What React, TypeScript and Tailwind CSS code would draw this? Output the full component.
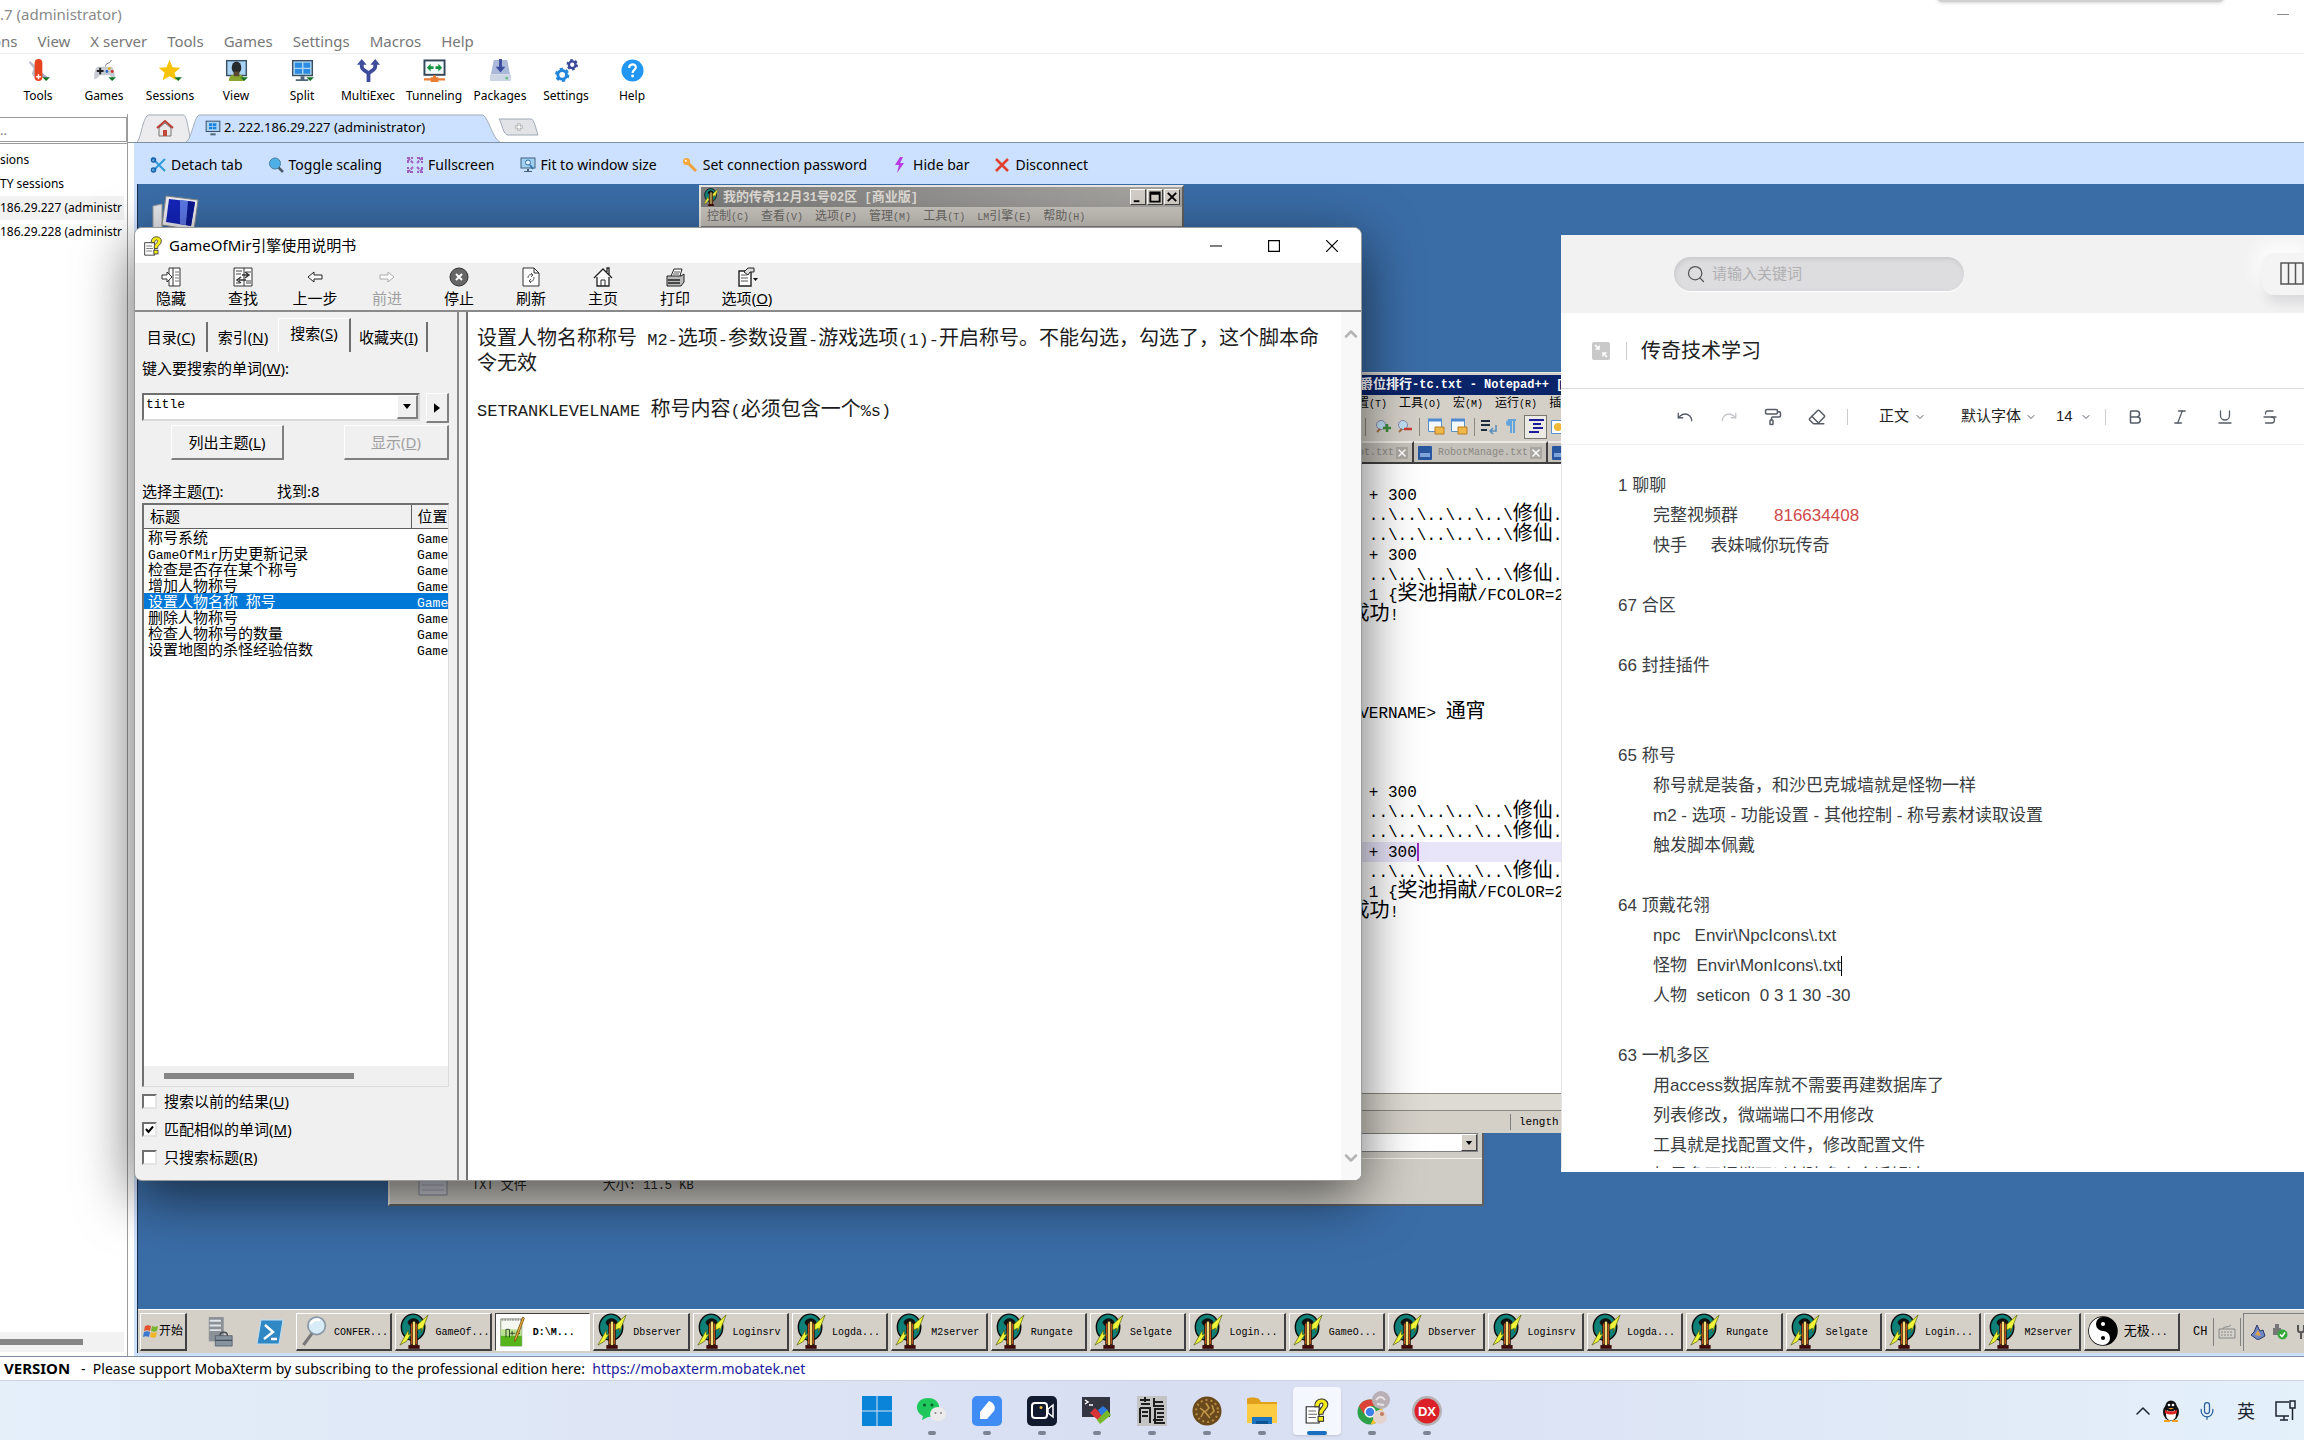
import type { ReactNode } from "react"
import { Search, Undo, Redo, PaintRoller, Eraser, Bold, Italic, Underline, Strikethrough, ChevronDown, ChevronUp, Mic, X } from "lucide-react"

const RAISED = "border border-t-white border-l-white border-r-[#404040] border-b-[#404040]"
const DIALOG_BTN = "border border-t-white border-l-white border-r-2 border-b-2 border-r-[#808080] border-b-[#808080] bg-[#f0f0f0]"

// SimSun-like text: Latin runs are set smaller so that they take half of a CJK cell
function Song({ children, latin }: { children: string, latin: string }) {
  return (
    <span className="whitespace-pre font-['Liberation_Mono','Noto_Sans_CJK_SC',monospace]">
      {children.split(/([\x20-\x7e]+)/).map((part, i) =>
        i % 2 ? <span key={i} className={latin}>{part}</span> : part
      )}
    </span>
  )
}

function Key({ children }: { children: string }) {
  return <>(<span className="underline">{children}</span>)</>
}

function Monitor({ children }: { children?: ReactNode }) {
  return (
    <>
      <rect x="1" y="1" width="22" height="17" fill="#3c5064" />
      <rect x="2.5" y="2.5" width="19" height="14" fill="#a9d4f5" />
      {children}
    </>
  )
}

const greenArrow = <path d="M16 19h8l-4 4z" fill="#17722a" />

const tools = [
  {
    name: "Tools", icon: <>
      <path d="M3 2l7 6-2 12-3-5 2-5-5-6z" fill="#b9bccb" />
      <path d="M14 13l8 6-2 3-8-6z" fill="#a8abc0" />
      <rect x="8" y="0" width="8" height="23" rx="4" fill="#e8431f" />
      <path d="M12 16v5M9.5 18.5h5" stroke="#fff" strokeWidth="1.5" />
      {greenArrow}
    </>
  },
  {
    name: "Games", icon: <>
      <path d="M13 8c0-5 5-2 6-7" fill="none" stroke="#777" />
      <path d="M5 8h14c3 0 5 12 3 13-2 0-4-4-5-4H8c-2 0-3 4-6 4-2-1 0-13 3-13z" fill="#c9cbd3" />
      <path d="M7.5 9v7M4 12.5h7" stroke="#222" strokeWidth="2" />
      <circle cx="17" cy="10" r="1.5" fill="#e0b010" /><circle cx="14.5" cy="13" r="1.5" fill="#2c68c8" /><circle cx="20" cy="13" r="1.5" fill="#d02c2c" />
      {greenArrow}
    </>
  },
  {
    name: "Sessions", icon: <>
      <path d="M11 1l3.200 7.500 8 .6-6 5.200 2 8L11 18l-7.200 4.300 2-8-6-5.200 8-.6z" fill="#f8c307" />
      {greenArrow}
    </>
  },
  {
    name: "View", icon: <>
      <Monitor />
      <path d="M4 23c0-6 4-7 8-7s8 1 8 7z" fill="#8aa62f" />
      <ellipse cx="12" cy="9" rx="5" ry="6.5" fill="#262a2c" />
      <path d="M9 13h6v5H9z" fill="#5b4630" />
      {greenArrow}
    </>
  },
  {
    name: "Split", icon: <>
      <Monitor><path d="M4 4h7.500v5H4zM13 4h7v5h-7zM4 10.500h7.500v5H4zM13 10.500h7v5h-7z" fill="#2b8be0" /></Monitor>
      <path d="M10 18h4v3h-4zM5 21h13v2H5z" fill="#50667c" />
      {greenArrow}
    </>
  },
  {
    name: "MultiExec", icon: <>
      <path d="M12 24v-8c0-3-7-4-7-8V4M12 16c0-3 7-4 7-8V4" fill="none" stroke="#3f4d9c" strokeWidth="4" />
      <path d="M0 6l5-6 5 6zM14 6l5-6 5 6z" fill="#3f4d9c" />
    </>
  },
  {
    name: "Tunneling", icon: <>
      <rect x="1.5" y="1.5" width="21" height="15" fill="#f2f8fb" stroke="#33475b" strokeWidth="2" />
      <path d="M4 9l4-4v2.500h3v3H8V13zM20 9l-4-4v2.500h-3v3h3V13z" fill="#15933e" />
      <path d="M12 17v4" stroke="#e07832" strokeWidth="3" /><path d="M1 20h22v2.500H1zM8 19h8v5H8z" fill="#ea7d35" />
    </>
  },
  {
    name: "Packages", icon: <>
      <path d="M5 1h14l3 15H2z" fill="#aab9da" />
      <rect x="1" y="16" width="22" height="7" rx="1" fill="#cdd6e4" />
      <path d="M12 0v10" stroke="#3b4b9e" strokeWidth="3" /><path d="M7 8h10l-5 6z" fill="#3b4b9e" />
      <circle cx="18.5" cy="20" r="1.5" fill="#6bc28a" />
    </>
  },
  {
    name: "Settings", icon: <>
      <circle cx="7.5" cy="16.5" r="4.5" fill="none" stroke="#1f86dc" strokeWidth="3" />
      <circle cx="7.5" cy="16.5" r="6.5" fill="none" stroke="#1f86dc" strokeWidth="2" strokeDasharray="3.4 3.4" />
      <circle cx="18" cy="6" r="3.5" fill="none" stroke="#3c4a9a" strokeWidth="2.5" />
      <circle cx="18" cy="6" r="5" fill="none" stroke="#3c4a9a" strokeWidth="2" strokeDasharray="2.6 2.6" />
    </>
  },
  {
    name: "Help", icon: <>
      <circle cx="12" cy="12" r="11.5" fill="#2196f3" />
      <path d="M8.500 9.500c0-5 7-5 7-.8 0 2.800-3.400 2.600-3.400 5.800" fill="none" stroke="#fff" strokeWidth="2.2" />
      <circle cx="12.1" cy="17.8" r="1.5" fill="#fff" />
    </>
  },
]

const menus = ["View", "X server", "Tools", "Games", "Settings", "Macros", "Help"]

const sessionActions = [
  {
    name: "Detach tab", icon: <>
      <path d="M2 1l13 13M15 2L3 14" stroke="#2f9bdc" strokeWidth="2" />
      <circle cx="3.5" cy="3" r="2" fill="none" stroke="#1c5fa8" strokeWidth="1.5" /><circle cx="3.5" cy="13" r="2" fill="none" stroke="#1c5fa8" strokeWidth="1.5" />
    </>
  },
  {
    name: "Toggle scaling", icon: <>
      <path d="M10 10l5 5" stroke="#4d5b66" strokeWidth="2.5" />
      <circle cx="7" cy="6.5" r="5.5" fill="#4fb0e8" stroke="#4a7f9f" />
    </>
  },
  {
    name: "Fullscreen", icon: <path d="M1 6V1h5M10 1h5v5M15 10v5h-5M6 15H1v-5M1 1l5 5M15 1l-5 5M15 15l-5-5M1 15l5-5" fill="none" stroke="#a05fc0" strokeWidth="2" strokeDasharray="3 1" />
  },
  {
    name: "Fit to window size", icon: <>
      <rect x="1" y="1" width="14" height="10" fill="#9fd0f2" stroke="#42607c" />
      <path d="M7 12h2v2h3v1H4v-1h3z" fill="#42607c" />
      <circle cx="8" cy="5.5" r="2.5" fill="#e4f3ff" stroke="#2b6ca6" /><path d="M10 8l3 4" stroke="#2b6ca6" strokeWidth="1.5" />
    </>
  },
  {
    name: "Set connection password", icon: <>
      <path d="M6 6l8 8" stroke="#eda13a" strokeWidth="3" />
      <circle cx="4.5" cy="4.5" r="3.5" fill="#f3a83c" /><circle cx="3.8" cy="3.8" r="1" fill="#fff" />
    </>
  },
  {
    name: "Hide bar", icon: <path d="M8 0L3 8h4l-2 8 7-10H8l3-6z" fill="#b63be0" />
  },
  {
    name: "Disconnect", icon: <path d="M2 2l12 12M14 2L2 14" stroke="#e2402f" strokeWidth="2.5" />
  },
]

function TabShape({ d, fill, box }: { d: string, fill: string, box: string }) {
  return (
    <svg className="absolute inset-0 size-full" viewBox={box} preserveAspectRatio="none">
      <path d={d} fill={fill} stroke="#a0aab6" />
    </svg>
  )
}

function HelpFileIcon({ className }: { className: string }) {
  return (
    <svg viewBox="0 0 24 24" className={className}>
      <path d="M2 8h12v15H2z" fill="#fff" stroke="#222" />
      <path d="M4 12h7M4 15h8M4 18h7" stroke="#666" />
      <path d="M10 8c-1-9 12-9 12-2 0 5-5 5-4.500 9h-4c-.5-6 4-6 4-9 0-2-3.500-2-3.500 2z" fill="#f5ea1c" stroke="#333" />
      <rect x="13" y="17" width="5" height="4.5" fill="#f5ea1c" stroke="#333" />
    </svg>
  )
}

function MirIcon({ className }: { className: string }) {
  return (
    <svg viewBox="0 0 32 38" className={className}>
      <ellipse cx="15" cy="15" rx="12.5" ry="14" fill="#0f8078" stroke="#0a0a0a" strokeWidth="1.5" />
      <path d="M9 10c3-6 10-6 13 0l-2 3h-9z" fill="#111" />
      <rect x="12" y="10" width="8" height="24" fill="#1a1008" />
      <path d="M13.500 11v22M18.500 11v22" stroke="#b9501c" strokeWidth="1.5" />
      <path d="M16 9v25" stroke="#f2df7a" strokeWidth="2.5" />
      <path d="M10 34h12v4H10z" fill="#3c0a08" />
      <path d="M31 2L20 12v6l4-2v4z" fill="#f0f438" stroke="#4c5a12" strokeWidth=".7" />
      <path d="M1 34l9-16v5l3-1-5 8z" fill="#f0f438" stroke="#4c5a12" strokeWidth=".7" />
    </svg>
  )
}

const helpTools = [
  { name: "隐藏", icon: <><path d="M8 1h11v18H8zM12 1v18" fill="#fff" stroke="#333" /><path d="M14 5h4M14 8h4M14 11h4M14 14h4" stroke="#777" /><path d="M1 8h5V5l5 5-5 5v-3H1z" fill="#fff" stroke="#333" /></> },
  { name: "查找", icon: <><path d="M1 1h18v18H1zM11 1v18" fill="#fff" stroke="#333" /><path d="M3 4h6M3 7h5M13 5h5M13 14h5M13 16h5M3 16h4" stroke="#444" /><path d="M9 8l6 0M12 5l4 3-4 3M13 13H6M8 10l-4 3 4 3" stroke="#333" fill="none" strokeWidth="1.5" /></> },
  { name: "上一步", icon: <path d="M3 10l6-5v3h8v4H9v3z" fill="#fff" stroke="#222" /> },
  { name: "前进", icon: <path d="M17 10l-6-5v3H3v4h8v3z" fill="#fff" stroke="#aaa" />, disabled: true },
  { name: "停止", icon: <><circle cx="10" cy="10" r="9" fill="#666" stroke="#333" /><path d="M7 7l6 6M13 7l-6 6" stroke="#fff" strokeWidth="2" /></> },
  { name: "刷新", icon: <><path d="M2 1h11l5 5v13H2zM13 1v5h5" fill="#fff" stroke="#333" /><path d="M7 11c0-3 2-4 5-3M10 6l2 2-2 2M13 10c0 4-2 5-5 4M10 12l-2 2 2 2" fill="none" stroke="#555" /></> },
  { name: "主页", icon: <><path d="M4 10v9h12v-9M1 11l9-9 9 9M14 5V1h2v7" fill="#fff" stroke="#222" strokeWidth="1.3" /><path d="M8 19v-6h4v6" fill="none" stroke="#222" /></> },
  { name: "打印", icon: <><path d="M6 9l3-7h8l-2 7" fill="#fff" stroke="#222" /><path d="M9 5h6M8 7h6" stroke="#555" /><path d="M2 9h14l3-2v8l-3 4H2z" fill="#bbb" stroke="#222" /><path d="M3 13h12M3 16h12" stroke="#222" strokeWidth="1.5" /></> },
  { name: "选项", hot: "O", icon: <><path d="M2 4h12v15H2z" fill="#fff" stroke="#222" strokeWidth="1.4" /><path d="M4 8h6M4 11h7M4 14h7" stroke="#555" /><path d="M7 5l4-4h6v4h-4l-2 3z" fill="#ddd" stroke="#222" /><path d="M16 11h5l-2.500 3z" fill="#111" /></> },
]

const topics = [
  "称号系统",
  "GameOfMir历史更新记录",
  "检查是否存在某个称号",
  "增加人物称号",
  "设置人物名称 称号",
  "删除人物称号",
  "检查人物称号的数量",
  "设置地图的杀怪经验倍数",
]

function HelpWindow() {
  return (
    <section className="absolute -left-1 top-[43px] z-30 flex h-[954px] w-[1228px] flex-col overflow-hidden rounded-lg border border-[#9a9a9a] bg-[#f0f0f0] text-[15px] text-black shadow-[0_16px_56px_rgba(0,0,0,0.6)]">
      <header className="flex h-[35px] shrink-0 items-center bg-white pl-2">
        <HelpFileIcon className="size-5" />
        <h1 className="ml-1.5">GameOfMir引擎使用说明书</h1>
        <div className="ml-auto flex">
          <button aria-label="Minimize" className="flex w-[58px] justify-center"><svg viewBox="0 0 12 12" className="size-3"><path d="M0 6h12" stroke="#000" /></svg></button>
          <button aria-label="Maximize" className="flex w-[58px] justify-center"><svg viewBox="0 0 12 12" className="size-3"><path d="M.5.500h11v11H.5z" fill="none" stroke="#000" strokeWidth="1.3" /></svg></button>
          <button aria-label="Close" className="flex w-[58px] justify-center"><svg viewBox="0 0 12 12" className="size-3"><path d="M0 0l12 12M12 0L0 12" stroke="#000" strokeWidth="1.2" /></svg></button>
        </div>
      </header>
      <nav className="flex h-[49px] shrink-0 border-b-2 border-[#8a8a8a]">
        {helpTools.map((t) => (
          <button key={t.name} disabled={t.disabled} className="flex w-[72px] flex-col items-center pt-1 leading-[22px] whitespace-nowrap disabled:text-[#a0a0a0]">
            <svg viewBox="0 0 21 20" className="h-5 w-[21px] shrink-0">{t.icon}</svg>
            <span>{t.name}{t.hot && <Key>{t.hot}</Key>}</span>
          </button>
        ))}
      </nav>
      <div className="flex min-h-0 flex-1">
        <div className="flex w-[324px] flex-col border-r-2 border-[#8a8a8a] pl-[7px] pr-[8px]">
          <div className="flex h-[40px] shrink-0 items-end">
            <button className="h-[30px] w-[66px] border-r-2 border-[#707070] pr-1.5">目录<Key>C</Key></button>
            <button className="h-[30px] w-[70px]">索引<Key>N</Key></button>
            <button className="h-[34px] w-[73px] border-t border-l border-r-2 border-t-white border-l-white border-r-[#707070] pb-1">搜索<Key>S</Key></button>
            <button className="h-[30px] w-[77px] border-r-2 border-[#707070]">收藏夹<Key>I</Key></button>
          </div>
          <label htmlFor="word" className="mt-1 leading-6">键入要搜索的单词<Key>W</Key>:</label>
          <div className="mt-[13px] flex gap-1.5">
            <div className="flex h-[28px] w-[279px] border-2 border-t-[#707070] border-l-[#707070] border-r-[#d8d8d8] border-b-[#d8d8d8] bg-white">
              <input id="word" defaultValue="title" className="min-w-0 flex-1 pb-1 pl-0.5 font-['Liberation_Mono',monospace] text-[13px] outline-none" />
              <button aria-label="History" className={"flex w-[21px] items-center justify-center " + DIALOG_BTN}><svg viewBox="0 0 8 5" className="h-[5px] w-2"><path d="M0 0h8L4 5z" /></svg></button>
            </div>
            <button aria-label="Operators" className={"flex h-[30px] w-[23px] items-center justify-center " + DIALOG_BTN}><svg viewBox="0 0 5 8" className="h-[10px] w-[6px]"><path d="M0 0v8l5-4z" /></svg></button>
          </div>
          <div className="mt-0.5 flex justify-between pl-[29px]">
            <button className={"h-[35px] w-[113px] " + DIALOG_BTN}>列出主题<Key>L</Key></button>
            <button disabled className={"h-[35px] w-[105px] text-[#a0a0a0] " + DIALOG_BTN}>显示<Key>D</Key></button>
          </div>
          <div className="mt-[19px] flex h-[24px] leading-6">
            <span className="w-[135px]">选择主题<Key>T</Key>:</span>
            <span>找到:8</span>
          </div>
          <div className="flex h-[584px] flex-col border-t-2 border-l-2 border-r border-b border-t-[#707070] border-l-[#707070] border-[#dcdcdc] bg-white">
            <table className="w-full table-fixed border-collapse text-left">
              <thead>
                <tr className="h-[23px] border-b border-[#606060] bg-[#f0f0f0]">
                  <th className="w-[267px] border-r border-[#606060] pl-1.5 leading-5 font-normal">标题</th>
                  <th className="overflow-hidden pl-1.5 leading-5 font-normal whitespace-nowrap">位置</th>
                </tr>
              </thead>
              <tbody className="leading-4">
                {topics.map((t) => (
                  <tr key={t} className={t.startsWith("设置人物") ? "h-4 bg-[#0078d7] text-white" : "h-4"}>
                    <td className="pl-1 whitespace-nowrap"><div className="h-4"><Song latin="text-[13px]">{t}</Song></div></td>
                    <td className="overflow-hidden pl-1.5"><div className="h-4"><Song latin="text-[13px]">Game</Song></div></td>
                  </tr>
                ))}
              </tbody>
            </table>
            <div className="mt-auto flex h-5 items-center bg-[#f0f0f0] pl-5">
              <div className="h-1.5 w-[190px] bg-[#868686]"></div>
            </div>
          </div>
          <div className="flex flex-col leading-7">
            {[["搜索以前的结果", "U"], ["匹配相似的单词", "M"], ["只搜索标题", "R"]].map(([name, hot]) => (
              <label key={hot} className="flex h-[28px] items-center gap-[7px]">
                <span className="relative flex">
                  <input type="checkbox" defaultChecked={hot === "M"} className="peer size-[15px] appearance-none border-2 border-t-[#707070] border-l-[#707070] border-r-[#e4e4e4] border-b-[#e4e4e4] bg-white" />
                  <svg viewBox="0 0 15 15" className="absolute inset-0 hidden peer-checked:block"><path d="M4 7l2.500 3L11 4.500" fill="none" stroke="#000" strokeWidth="2" /></svg>
                </span>
                <span>{name}<Key>{hot}</Key></span>
              </label>
            ))}
          </div>
        </div>
        <div className="ml-[7px] flex flex-1 border-l-2 border-[#707070] bg-white">
          <article className="flex-1 pt-[14px] pl-[9px] text-xl/[23px] text-[#1c1c1c]">
            <p><Song latin="text-[17px] leading-none">设置人物名称称号 M2-选项-参数设置-游戏选项(1)-开启称号。不能勾选，勾选了，这个脚本命</Song></p>
            <p>令无效</p>
            <p className="mt-[23px]"><Song latin="text-[17px] leading-none">SETRANKLEVELNAME 称号内容(必须包含一个%s)</Song></p>
          </article>
          <div className="flex w-5 flex-col items-center justify-between bg-[#f8f8f8] py-3 text-[#b4b4b4]">
            <ChevronUp className="size-5" strokeWidth={3} />
            <ChevronDown className="size-5" strokeWidth={3} />
          </div>
        </div>
      </div>
    </section>
  )
}

function EngineWindow() {
  return (
    <section className="absolute left-[561px] top-px h-[120px] w-[485px] border-2 border-t-[#e8e6e0] border-l-[#e8e6e0] border-r-[#606060] border-b-[#606060] bg-[#c8c5be]">
      <header className="flex h-[20px] items-center bg-linear-to-r from-[#7c7c7c] to-[#a8a6a2] px-0.5 text-[13px] text-[#dedbd4]">
        <MirIcon className="mr-1 h-[18px] w-4" />
        <h2 className="font-bold"><Song latin="text-xs">我的传奇12月31号02区 [商业版]</Song></h2>
        <div className="ml-auto flex gap-px">
          {["M3 12h6", "M2.500 2.500h10v10h-10zM2 4h11", "M3 3l9 9M12 3l-9 9"].map((d) => (
            <button key={d} aria-label="Window control" className={"bg-[#d4d0c8] " + RAISED}><svg viewBox="0 0 15 15" className="size-3.5"><path d={d} fill="none" stroke="#000" strokeWidth="2" /></svg></button>
          ))}
        </div>
      </header>
      <nav className="flex h-5 items-center gap-3 border-b border-[#808080] pl-[6px] text-xs text-[#6c6a66]">
        {["控制(C)", "查看(V)", "选项(P)", "管理(M)", "工具(T)", "LM引擎(E)", "帮助(H)"].map((m) => (
          <Song key={m} latin="text-[10px]">{m}</Song>
        ))}
      </nav>
    </section>
  )
}

const codeBlock = [
  "   + 300",
  "   ..\\..\\..\\..\\..\\修仙.",
  "   ..\\..\\..\\..\\..\\修仙.",
  "   + 300",
  "   ..\\..\\..\\..\\..\\修仙.",
  "   1 {奖池捐献/FCOLOR=25",
  " 成功!",
]

function Code({ children, active }: { children: string, active?: boolean }) {
  return (
    <div className={active ? "flex h-5 items-center bg-[#e8e4fa]" : "flex h-5 items-center"}>
      <Song latin="text-base leading-none">{children}</Song>
      {active && <span className="h-[18px] w-0.5 bg-[#a030c0]"></span>}
    </div>
  )
}

function NotepadWindow() {
  return (
    <section className="absolute left-[1202px] top-[188px] flex h-[761px] w-[300px] flex-col overflow-hidden border-t border-[#e8e6e0] bg-[#d4d0c8]">
      <h2 className="mt-0.5 flex h-[20px] shrink-0 items-center bg-[#0a246a] pl-[20px] text-[13px] font-bold text-white"><Song latin="text-xs">爵位排行-tc.txt - Notepad++ [</Song></h2>
      <nav className="flex h-[18px] shrink-0 items-center gap-3 pl-[17px] text-xs">
        {["置(T)", "工具(O)", "宏(M)", "运行(R)", "插件(P)"].map((m) => <Song key={m} latin="text-[10px]">{m}</Song>)}
      </nav>
      <svg viewBox="0 0 240 28" className="h-[28px] w-[240px] shrink-0">
        <path d="M25.500 5v18M79.500 5v18M134.500 5v18" stroke="#8a8880" />
        <circle cx="41" cy="12" r="4.5" fill="#bfe0f4" stroke="#88a" /><path d="M43 15h8M47 11v8" stroke="#3c8a3c" strokeWidth="2.5" /><path d="M37 19l3-3" stroke="#a86c3c" strokeWidth="2" />
        <circle cx="63" cy="12" r="4.5" fill="#bfe0f4" stroke="#88a" /><path d="M64 16h8" stroke="#cc3c34" strokeWidth="2.5" /><path d="M59 19l3-3" stroke="#a86c3c" strokeWidth="2" />
        <path d="M88.500 6.500h13v12h-13zM111.500 6.500h13v12h-13z" fill="#f4f8ff" stroke="#5a90c8" /><path d="M88 7h14M111 7h14" stroke="#4e8ad0" strokeWidth="3" />
        <path d="M95 14h9v7h-9zM118 14h9v7h-9z" fill="#f0b848" stroke="#b87c20" />
        <path d="M141 8h9M141 12h9M141 17h6" stroke="#1c2c3c" strokeWidth="2" /><path d="M156 12v6h-5M153 15l-3 3 3 3" stroke="#5a8cb8" strokeWidth="1.5" fill="none" />
        <path d="M168 7h8M171 7v13M174 7v13" stroke="#64a4dc" strokeWidth="2" /><circle cx="169" cy="10" r="3" fill="#64a4dc" />
        <rect x="184.5" y="2.5" width="22" height="23" fill="#eceae4" stroke="#77756e" />
        <path d="M189 7h15M193 11h8M193 15h10M189 19h10" stroke="#1c1c9c" strokeWidth="2" />
        <path d="M211.500 7.500h20v13h-20z" fill="#fff" stroke="#5a90c8" /><circle cx="218" cy="14" r="4" fill="#efb838" />
      </svg>
      <div className="flex h-[23px] shrink-0 items-center border-b-2 border-[#404040] bg-[#c4c1ba] text-[#8a8780]">
        {["bot.txt", "RobotManage.txt", "Robot.txt"].map((f) => (
          <div key={f} className="flex h-full shrink-0 items-center border-t-2 border-r-2 border-t-[#eceae4] border-r-[#404040] pr-1">
            {f !== "bot.txt" && <svg viewBox="0 0 14 14" className="ml-1 mr-1.5 size-3.5"><rect width="14" height="14" rx="1" fill="#2a56a0" /><path d="M2 7h10v4H2z" fill="#7ea4dc" /></svg>}
            <span className={f === "bot.txt" ? "pl-3 font-['Liberation_Mono',monospace] text-[10px]" : "font-['Liberation_Mono',monospace] text-[10px]"}>{f}</span>
            <X className="ml-0.5 size-3 bg-[#aaa7a0] text-white" strokeWidth={3} />
          </div>
        ))}
      </div>
      <div className="flex-1 bg-white pt-[21px] text-xl/5">
        {codeBlock.map((line, i) => <Code key={i}>{line}</Code>)}
        <div className="pt-[78px] pb-[59px]"><Code>{" RVERNAME> 通宵"}</Code></div>
        {codeBlock.map((line, i) => <Code key={i} active={i === 3}>{line}</Code>)}
      </div>
      <div className="h-[18px] border-y border-[#8a8880] bg-[#dedbd4]"></div>
      <div className="flex h-[22px] items-center"><span className="ml-[170px] border-l border-[#808080] pl-2 font-['Liberation_Mono',monospace] text-[11px]">length : 3</span></div>
    </section>
  )
}

function ExplorerWindow() {
  return (
    <section className="absolute left-[250px] top-[761px] flex h-[261px] w-[1096px] flex-col border-2 border-t-[#e8e6e0] border-l-[#e8e6e0] border-r-[#606060] border-b-[#606060] bg-[#cfccc5]">
      <div className="mt-auto mr-1 ml-auto flex h-[19px] w-[240px] justify-end border border-[#808080] bg-white">
        <button aria-label="Path" className={"flex w-4 items-center justify-center bg-[#d4d0c8] " + RAISED}><svg viewBox="0 0 8 5" className="h-1 w-2"><path d="M0 0h8L4 5z" /></svg></button>
      </div>
      <div className="mt-1.5 flex h-[46px] gap-[76px] border-t border-[#f4f2ee] pl-7 text-[13px] text-[#222]">
        <svg viewBox="0 0 30 36" className="-mr-[52px] h-[38px] w-[30px]"><path d="M1 0h28v35H1z" fill="#d0d3dc" stroke="#858a98" /><path d="M4 20h22M4 25h22M4 30h22" stroke="#a4aabc" /></svg>
        <span className="pt-4"><Song latin="text-xs">TXT 文件</Song></span>
        <span className="pt-4"><Song latin="text-xs">大小: 11.5 KB</Song></span>
      </div>
    </section>
  )
}

const notes: { text: string, red?: string, caret?: boolean }[] = [
  { text: "1 聊聊" },
  { text: "\t完整视频群", red: "816634408" },
  { text: "\t快手     表妹喊你玩传奇" },
  { text: "" },
  { text: "67 合区" },
  { text: "" },
  { text: "66 封挂插件" },
  { text: "" },
  { text: "" },
  { text: "65 称号" },
  { text: "\t称号就是装备，和沙巴克城墙就是怪物一样" },
  { text: "\tm2 - 选项 - 功能设置 - 其他控制 - 称号素材读取设置" },
  { text: "\t触发脚本佩戴" },
  { text: "" },
  { text: "64 顶戴花翎" },
  { text: "\tnpc   Envir\\NpcIcons\\.txt" },
  { text: "\t怪物  Envir\\MonIcons\\.txt", caret: true },
  { text: "\t人物  seticon  0 3 1 30 -30" },
  { text: "" },
  { text: "63 一机多区" },
  { text: "\t用access数据库就不需要再建数据库了" },
  { text: "\t列表修改，微端端口不用修改" },
  { text: "\t工具就是找配置文件，修改配置文件" },
  { text: "\t如果多开把端可以创建多个会话解决" },
]

function Picker({ label, value, width }: { label: string, value: string, width: string }) {
  return (
    <span className="flex shrink-0 items-center">
      <select aria-label={label} defaultValue={value} className={"appearance-none bg-transparent text-[15px] text-[#222] " + width}>
        <option>{value}</option>
      </select>
      <ChevronDown className="size-3" />
    </span>
  )
}

function NotesWindow() {
  return (
    <section className="absolute top-[51px] right-0 left-[1423px] z-20 flex h-[937px] flex-col overflow-hidden bg-white font-['Liberation_Sans','Noto_Sans_CJK_SC',sans-serif]">
      <header className="relative flex h-[78px] shrink-0 items-center bg-[#f2f2f2] pl-[113px]">
        <label className="flex h-[34px] w-[290px] items-center gap-1.5 rounded-full bg-[#dddcde] pl-3 shadow-[inset_1px_2px_4px_#c8c7ca,0_1px_1px_#fff]">
          <Search className="size-5 text-[#555]" strokeWidth={1.5} />
          <input aria-label="Search" placeholder="请输入关键词" className="w-48 text-[15px] outline-none placeholder:text-[#b0b0b2]" />
        </label>
        <button aria-label="Layout" className="absolute top-[18px] -right-[10px] flex h-[42px] w-[52px] items-center rounded-xl bg-[#f4f4f5] pl-[18px] shadow-[4px_8px_12px_#dadadd,-4px_-8px_20px_#fff]">
          <svg viewBox="0 0 24 24" className="size-6"><path d="M1 1h22v21H1zM8.500 1v21M15.500 1v21" fill="none" stroke="#555" strokeWidth="1.5" /></svg>
        </button>
      </header>
      <div className="flex h-[76px] shrink-0 items-center border-b border-[#dcdce2] pl-[31px]">
        <svg viewBox="0 0 18 18" className="size-[18px]"><rect width="18" height="18" rx="2" fill="#c9c9c9" /><path d="M3 3l4 4M7 3.500V7H3.500M15 15l-4-4M11 14.500V11h3.500" fill="none" stroke="#fff" strokeWidth="1.5" /></svg>
        <span className="ml-4 mr-[14px] h-[18px] w-px bg-[#ccc]"></span>
        <h2 className="text-xl text-[#222]">传奇技术学习</h2>
      </div>
      <div className="flex h-[56px] shrink-0 items-center border-b border-[#f0f0f2] pl-[115px] text-[#555b66]">
        <div className="flex w-[160px] shrink-0 items-center gap-[26px]">
          <Undo className="size-[18px] shrink-0" strokeWidth={1.7} />
          <Redo className="size-[18px] shrink-0 text-[#c4c6ca]" strokeWidth={1.7} />
          <PaintRoller className="size-[18px] shrink-0" strokeWidth={2} />
          <Eraser className="size-[18px] shrink-0" strokeWidth={2} />
        </div>
        <span className="mr-[31px] ml-[11px] h-4 w-px shrink-0 bg-[#ccc]"></span>
        <Picker label="Paragraph" value="正文" width="w-[35px]" />
        <span className="w-[35px] shrink-0"></span>
        <Picker label="Font" value="默认字体" width="w-[64px]" />
        <span className="w-[19px] shrink-0"></span>
        <Picker label="Size" value="14" width="w-[24px]" />
        <span className="mr-[20px] ml-[13px] h-4 w-px shrink-0 bg-[#ccc]"></span>
        <div className="flex shrink-0 items-center gap-[27px]">
          <Bold className="size-[18px]" strokeWidth={2} />
          <Italic className="size-[18px]" strokeWidth={1.7} />
          <Underline className="size-[18px]" strokeWidth={1.7} />
          <Strikethrough className="size-[18px]" strokeWidth={1.7} />
          <span className="border-b-2 border-[#c84a40] text-lg/4">A</span>
        </div>
      </div>
      <div className="mb-1 min-h-0 flex-1 overflow-hidden border-l border-[#e4e4e8] pt-[26px] pl-[56px] text-[17px]/[30px] text-[#3a3d42]">
        {notes.map((n, i) => (
          <p key={i} className={n.text.startsWith("\t") ? "flex h-[30px] items-center pl-[35px] whitespace-pre" : "flex h-[30px] items-center whitespace-pre"}>
            {n.text.trim()}
            {n.red && <span className="ml-[36px] text-[#d04a4a]">{n.red}</span>}
            {n.caret && <span className="h-5 w-px bg-black"></span>}
          </p>
        ))}
      </div>
    </section>
  )
}

const remoteTasks = [
  "CONFER...", "GameOf...", "D:\\M...", "Dbserver", "Loginsrv", "Logda...", "M2server", "Rungate", "Selgate", "Login...",
  "GameO...", "Dbserver", "Loginsrv", "Logda...", "Rungate", "Selgate", "Login...", "M2server", "无极...",
]

function taskIcon(name: string) {
  if (name === "CONFER...") {
    return (
      <svg viewBox="0 0 32 36" className="h-9 w-7 shrink-0">
        <path d="M15 19L4 34" stroke="#777" strokeWidth="3.5" /><circle cx="19" cy="12" r="10" fill="#d8ecf8" stroke="#8a97a4" strokeWidth="2" />
        <path d="M12 10c2-5 8-6 11-4" stroke="#fff" strokeWidth="3" fill="none" />
      </svg>
    )
  }
  if (name.startsWith("D:")) {
    return (
      <svg viewBox="0 0 32 36" className="h-9 w-7 shrink-0">
        <path d="M2 3h24v31H2z" fill="#f4f8f0" stroke="#7a8a70" /><path d="M2 22h24v12H2z" fill="#57b51c" /><path d="M2 15h24v7H2z" fill="#b9e08c" />
        <path d="M3 4h23" stroke="#999" strokeWidth="2" strokeDasharray="2 1" />
        <path d="M8 24v-9h4v9M15 17v5M13 19.500h5M21 17v5M19 19.500h5" stroke="#28381c" fill="none" />
        <path d="M29 2L20 26l-2 3v-4l9-24z" fill="#edb33c" stroke="#805818" />
      </svg>
    )
  }
  if (name.startsWith("无极")) {
    return (
      <svg viewBox="0 0 32 32" className="size-[30px] shrink-0">
        <circle cx="16" cy="16" r="15" fill="#000" stroke="#000" strokeWidth="1.5" />
        <path d="M16 1a15 15 0 000 30 7.500 7.500 0 000-15 7.500 7.500 0 010-15z" fill="#fff" />
        <circle cx="16" cy="8.5" r="2.2" fill="#fff" /><circle cx="16" cy="23.5" r="2.2" fill="#000" />
      </svg>
    )
  }
  return <MirIcon className="h-9 w-[30px] shrink-0" />
}

function RemoteTaskbar() {
  return (
    <footer className="absolute inset-x-0 bottom-0 flex h-[44px] items-center border-t border-white bg-[#d4d0c8] pl-0.5">
      <button className={"flex h-[38px] w-[47px] shrink-0 items-center justify-center border-r-2 border-b-2 text-xs " + RAISED}>
        <svg viewBox="0 0 16 16" className="size-4"><path d="M2 3c2-1 4-1 6 0L7 8C5 7 3 7 1 8z" fill="#e2502c" /><path d="M9 3c2 1 4 1 6 0l-1 5c-2 1-4 1-6 0z" fill="#7ab42c" /><path d="M1 9c2-1 4-1 6 0l-1 5c-2-1-4-1-6 0z" fill="#3a78d0" /><path d="M8 9c2 1 4 1 6 0l-1 5c-2 1-4 1-6 0z" fill="#f0b428" /></svg>
        开始
      </button>
      <div className="flex w-[109px] shrink-0 items-center gap-[22px] pl-[19px]">
        <svg viewBox="0 0 30 36" className="h-9 w-[28px]"><path d="M3 2h16v26H3z" fill="#8b9197" /><path d="M4 6h12M4 11h12M4 16h12" stroke="#e2e6ea" strokeWidth="2" /><path d="M10 22h18v11H10z" fill="#8792a0" stroke="#5b646e" /><path d="M15 22c0-5 8-5 8 0M10 27h18" fill="none" stroke="#444c56" strokeWidth="1.5" /></svg>
        <svg viewBox="0 0 28 26" className="h-7 w-[28px]"><path d="M5 1h22l-4 24H1z" fill="#2f87c4" stroke="#bfe0f4" /><path d="M9 6l8 7-9 7M15 20h6" fill="none" stroke="#fff" strokeWidth="2.5" /></svg>
      </div>
      <div className="flex h-[38px] min-w-0 flex-1 gap-[3px]">
        {remoteTasks.map((t, i) => (
          <button key={i} className={t.startsWith("D:")
            ? "flex min-w-0 flex-1 items-center border border-t-[#404040] border-l-[#404040] border-r-white border-b-white bg-white pl-[3px] font-bold"
            : "flex min-w-0 flex-1 items-center border border-t-white border-l-white border-r-2 border-b-2 border-r-[#404040] border-b-[#404040] pl-[3px]"}>
            {taskIcon(t)}
            <span className="ml-1.5 text-[13px]"><Song latin="text-[10px]">{t}</Song></span>
          </button>
        ))}
      </div>
      <div className="flex h-[38px] w-[124px] shrink-0 items-center pl-[13px]">
        <span className="text-xs"><Song latin="text-xs">CH</Song></span>
        <span className="ml-1.5 h-7 w-px bg-[#808080]"></span>
        <svg viewBox="0 0 18 14" className="mx-1 h-4 w-[18px]"><path d="M1 4h16v9H1z" fill="none" stroke="#888" /><path d="M3 7h12M3 10h12" stroke="#888" strokeDasharray="2 1" /><path d="M5 4c0-3 5-1 8-4" fill="none" stroke="#888" /></svg>
        <span className="h-7 w-px bg-[#808080]"></span>
        <div className="ml-0.5 flex h-full flex-1 items-center gap-1.5 overflow-hidden border-t border-l border-[#808080] pl-1.5">
          <svg viewBox="0 0 16 16" className="size-4 shrink-0"><path d="M1 11l3-3 3-7 3 6 3-1 2 6-7 4z" fill="#6d86c4" stroke="#2f3b64" /><path d="M5 11l3-5 3 6z" fill="#e0a050" /></svg>
          <svg viewBox="0 0 16 16" className="size-4 shrink-0"><path d="M3 0h4v4h2v7H1V4h2z" fill="#777" /><circle cx="10.5" cy="10.5" r="5" fill="#35a83c" /><path d="M8 10.500l2 2 3-4" fill="none" stroke="#fff" strokeWidth="1.5" /></svg>
          <svg viewBox="0 0 16 16" className="size-4 shrink-0"><path d="M4 1v5c0 3 6 3 6 0V1M7 8v7" fill="none" stroke="#555" strokeWidth="2" /></svg>
        </div>
      </div>
    </footer>
  )
}

const hostApps = [
  { name: "Start", icon: <path d="M0 0h14.500v14.500H0zM15.500 0H30v14.500H15.500zM0 15.500h14.500V30H0zM15.500 15.500H30V30H15.500z" fill="#0a84d8" /> },
  {
    name: "WeChat", icon: <>
      <path d="M11 2c15 0 15 19 0 19l-6 3 1-4C-4 15-1 2 11 2z" fill="#1fc85c" /><circle cx="7.5" cy="9" r="1.5" fill="#0b5c2a" /><circle cx="15" cy="9" r="1.5" fill="#0b5c2a" />
      <ellipse cx="21" cy="18" rx="8" ry="7" fill="#eceaea" /><circle cx="18.5" cy="17" r="1" fill="#888" /><circle cx="24" cy="17" r="1" fill="#888" />
    </>
  },
  { name: "Notes", icon: <><rect width="30" height="30" rx="5" fill="#3f8cf4" /><path d="M17 5c5 2 7 6 5 10l-7 8H8v-7z" fill="#fff" /></> },
  { name: "Recorder", icon: <><rect width="30" height="30" rx="5" fill="#111a2e" /><rect x="5" y="7" width="15" height="15" rx="3" fill="none" stroke="#fff" strokeWidth="2" /><path d="M21 13l5-4v12l-5-4z" fill="none" stroke="#fff" strokeWidth="1.5" /><circle cx="14" cy="11.5" r="1.5" fill="#f0c040" /></> },
  { name: "MobaXterm", icon: <><path d="M0 1h28v20H0z" fill="#333640" /><path d="M3 4l3 2-3 2M7 9h4" stroke="#fff" fill="none" strokeWidth="1.5" /><path d="M8 17l5-5 8 8-3 6z" fill="#d83438" /><path d="M16 14l5-4 5 4-6 7z" fill="#2f7ae0" /><path d="M18 28l-3-4 10-10 4 5z" fill="#78b82c" /></> },
  { name: "Legend", icon: <><path d="M0 0h30v30H0z" fill="#c4c4c4" /><path d="M3 4h10M8 1v5M4 8h9M3 12h10v15M3 12v15M5 16h6M5 20h6M17 2v8h10M17 6h9M17 13h10M18 13v14h10M20 17h7M20 21h7M16 24h10" stroke="#1e1e1e" strokeWidth="2" fill="none" /></> },
  { name: "Coin", icon: <><circle cx="15" cy="15" r="14.5" fill="#6a4a1c" /><circle cx="15" cy="15" r="11" fill="none" stroke="#b88c3c" strokeWidth="2" strokeDasharray="2 3" /><path d="M8 12l4 3-3 6M14 7l3 5-4 4 5 6M20 9l2 6-4 4" stroke="#c49a4c" fill="none" strokeWidth="1.5" /></> },
  { name: "Files", icon: <><path d="M0 3c0-2 10-2 12 0l2 3h16v21H0z" fill="#e0a01c" /><path d="M0 8h30v19H0z" fill="#fbcb44" /><path d="M5 21h20v7H5z" fill="#1d74c0" /><path d="M9 25h12v3H9z" fill="#0e5494" /></> },
  { name: "Help file", icon: null },
  { name: "Chrome", icon: <><circle cx="13" cy="16" r="12.5" fill="#2da04a" /><path d="M2 10a12.500 12.500 0 0122 0H13l-6 8z" fill="#dc4438" /><path d="M24.500 11a12.500 12.500 0 01-11 17.500l5-10z" fill="#f6c42c" /><circle cx="13" cy="16" r="5" fill="#3f7fe8" stroke="#fff" strokeWidth="1.5" /><circle cx="24" cy="4" r="9" fill="#b8b0b4" /><path d="M19 4c3-4 6-4 9 0M20 8l7 1" stroke="#e8e2e4" fill="none" strokeWidth="2" /><circle cx="23" cy="21" r="7" fill="#e4d4d0" /><circle cx="25" cy="18" r="2" fill="#c07c5c" /></> },
  { name: "DX", icon: <><circle cx="15" cy="15" r="15" fill="#b4b2b4" /><circle cx="15" cy="15" r="12.5" fill="#dc2028" /><text x="15" y="20" textAnchor="middle" fontSize="13" fontWeight="bold" fill="#fff" fontFamily="Liberation Sans">DX</text></> },
]

function HostTaskbar() {
  return (
    <footer className="relative flex h-[60px] shrink-0 justify-center border-t border-[#ccd4e2] bg-linear-to-r from-[#e4effa] via-[#d8def2] to-[#e4f0fa]">
      <div className="flex items-center">
        {hostApps.map((a) => (
          <button key={a.name} aria-label={a.name} className="relative flex h-full w-[55px] items-center justify-center">
            {a.icon === null
              ? <span className="flex h-[48px] w-[48px] items-center justify-center rounded bg-[#f4f7fe] shadow-sm"><HelpFileIcon className="size-[26px]" /></span>
              : <svg viewBox="0 0 30 30" className="size-[30px] overflow-visible">{a.icon}</svg>}
            {a.name !== "Start" && <span className={a.icon === null ? "absolute bottom-[5px] h-1 w-5 rounded-full bg-[#1a6fc0]" : "absolute bottom-[5px] h-1 w-2 rounded-full bg-[#7c8494]"}></span>}
          </button>
        ))}
      </div>
      <div className="absolute inset-y-0 right-2 flex items-center text-[#1c2430]">
        <ChevronUp className="mr-1 size-6" strokeWidth={1.5} />
        <svg viewBox="0 0 20 22" className="ml-0.5 h-[22px] w-5"><ellipse cx="10" cy="12" rx="8" ry="9" fill="#111" /><ellipse cx="10" cy="14.5" rx="5" ry="6" fill="#fff" /><circle cx="10" cy="6" r="5.5" fill="#111" /><circle cx="8" cy="5" r="1.3" fill="#fff" /><circle cx="12" cy="5" r="1.3" fill="#fff" /><path d="M7 8h6l-3 1.500z" fill="#f0a020" /><path d="M4 10c4 2 8 2 12 0v3c-4 2-8 2-12 0z" fill="#e02424" /><path d="M3 20h6v2H3zM11 20h6v2h-6z" fill="#f0a020" /></svg>
        <Mic className="ml-4 size-5 text-[#2a5f9c]" strokeWidth={1.5} />
        <span className="mr-[19px] ml-5 text-lg">英</span>
        <svg viewBox="0 0 22 22" className="size-[22px]"><path d="M15 2H2v14h13M6 20h8M10 16v4" fill="none" stroke="#1c2430" strokeWidth="1.5" /><path d="M16 1h5v7h-5zM18.500 8v12" fill="none" stroke="#1c2430" strokeWidth="1.5" /></svg>
      </div>
    </footer>
  )
}

export default function App() {
  return (
    <div className="relative flex h-screen flex-col overflow-hidden bg-white font-['Noto_Sans','Noto_Sans_CJK_SC',sans-serif] text-[13px] text-black">
      <div className="absolute -top-2 right-[81px] h-2.5 w-[285px] rounded bg-[#d0d0d0] shadow-[0_0_4px_#bbb]"></div>
      <header className="flex h-[29px] shrink-0 items-center justify-between text-[15px] text-[#8a8a8a]">
        <span>.7 (administrator)</span>
        <button aria-label="Minimize window" className="mr-[15px] h-px w-3 bg-[#8a8a8a]"></button>
      </header>
      <nav className="flex h-[25px] shrink-0 items-center gap-5 border-b border-[#ececec] text-[15px] text-[#777]">
        <button className="-ml-2">ons</button>
        {menus.map((m) => <button key={m}>{m}</button>)}
      </nav>
      <div className="flex h-[60px] shrink-0 pl-[5px]">
        {tools.map((t) => (
          <button key={t.name} className="flex w-[66px] flex-col items-center gap-1.5 pt-[5px] text-xs leading-4">
            <svg viewBox="0 0 24 24" className="size-[23px]">{t.icon}</svg>
            {t.name}
          </button>
        ))}
      </div>

      <div className="flex min-h-0 flex-1">
        <aside className="flex w-[128px] shrink-0 flex-col border-r border-[#9c9c9c] pt-[3px]">
          <input aria-label="Quick connect" defaultValue=".." className="h-[25px] w-[127px] border border-l-0 border-[#9c9c9c] text-[#777]" />
          <div className="mt-px flex flex-1 flex-col border-t border-[#9c9c9c] pt-1 text-xs">
            {["sions", "TY sessions", "186.29.227 (administr", "186.29.228 (administr"].map((s) => (
              <div key={s} className={s.includes("227") ? "h-6 w-[124px] bg-[#f2f2f2] leading-6 whitespace-nowrap" : "h-6 w-[124px] leading-6 whitespace-nowrap"}>{s}</div>
            ))}
            <div className="mt-auto mb-1 flex h-5 w-[124px] items-center bg-[#f2f2f2]">
              <div className="h-1.5 w-[83px] bg-[#868686]"></div>
            </div>
          </div>
        </aside>

        <main className="flex min-w-0 flex-1 flex-col">
          <div className="flex h-[29px] shrink-0 border-b border-[#7f8fa4] pl-[9px]">
            <button aria-label="Home" className="relative flex w-[56px] items-center justify-center">
              <TabShape box="0 0 56 29" fill="#ececee" d="M0 29C4 26 6 1 12 1h34c4 0 5 14 8 28" />
              <svg viewBox="0 0 18 18" className="relative size-[18px]"><path d="M3 9v8h12V9L9 4z" fill="#e8e8e8" stroke="#777" /><path d="M1 9l8-7 8 7" fill="none" stroke="#b83c30" strokeWidth="2" /><path d="M7 11h4v6H7z" fill="#c04838" /></svg>
            </button>
            <button className="relative -mx-[7px] flex w-[314px] items-center gap-[3px] pl-[19px]">
              <TabShape box="0 0 314 29" fill="#cce0ff" d="M0 29C6 26 8 1 14 1h282c6 0 10 24 18 28" />
              <svg viewBox="0 0 24 24" className="relative size-4"><Monitor><path d="M6 5h5v4H6zM12 5h5v4h-5zM6 10h5v4H6zM12 10h5v4h-5z" fill="#1c84e0" /></Monitor><path d="M8 20h8v3H8z" fill="#50667c" /></svg>
              <span className="relative">2. 222.186.29.227 (administrator)</span>
            </button>
            <button aria-label="New tab" className="relative mt-1 ml-[5px] flex h-[18px] w-[41px] items-center justify-center">
              <TabShape box="0 0 41 18" fill="#e2e3e6" d="M1 1h32c3 0 5 10 7 16H10C5 17 4 5 1 1z" />
              <svg viewBox="0 0 8 8" className="relative size-2"><path d="M3 0h2v3h3v2H5v3H3V5H0V3h3z" fill="#fff" stroke="#888" strokeWidth=".6" /></svg>
            </button>
          </div>
          <div className="ml-[6px] flex min-h-0 flex-1 flex-col bg-[#cce0ff] pl-[3px]">
            <nav className="flex h-[41px] shrink-0 items-center gap-[25px] pt-[3px] pl-[13px] text-sm">
              {sessionActions.map((a) => (
                <button key={a.name} className="flex items-center gap-[5px]">
                  <svg viewBox="0 0 16 16" className="size-4">{a.icon}</svg>
                  {a.name}
                </button>
              ))}
            </nav>
            <div className="relative mb-[3px] min-h-0 flex-1 border-l border-[#1b2c44] bg-[#3a6ca6]">
              <svg viewBox="0 0 48 44" className="absolute top-[9px] left-[14px] h-[46px] w-12"><path d="M1 12l9-2v30H1z" fill="#e4e6ea" stroke="#999" /><path d="M14 2l32 4-4 30-32-5z" fill="#eeeef2" stroke="#888" /><path d="M17 5l26 3-4 24-25-4z" fill="#1424b8" /><path d="M28 6l9 1-3 24-6-1z" fill="#5c78e8" /><path d="M36 7l7 1-4 24-5-1z" fill="#0c1890" /></svg>
              <ExplorerWindow />
              <EngineWindow />
              <NotepadWindow />
              <NotesWindow />
              <HelpWindow />
              <RemoteTaskbar />
            </div>
          </div>
        </main>
      </div>

      <div className="flex h-[24px] shrink-0 items-center border-t border-[#7f8fa4] bg-white pl-1 text-sm whitespace-pre">
        <b className="text-[15px]">VERSION</b>
        <span>{"   -  Please support MobaXterm by subscribing to the professional edition here:  "}</span>
        <a href="https://mobaxterm.mobatek.net" className="text-[#1a1a9c]">https://mobaxterm.mobatek.net</a>
      </div>
      <HostTaskbar />
    </div>
  )
}
